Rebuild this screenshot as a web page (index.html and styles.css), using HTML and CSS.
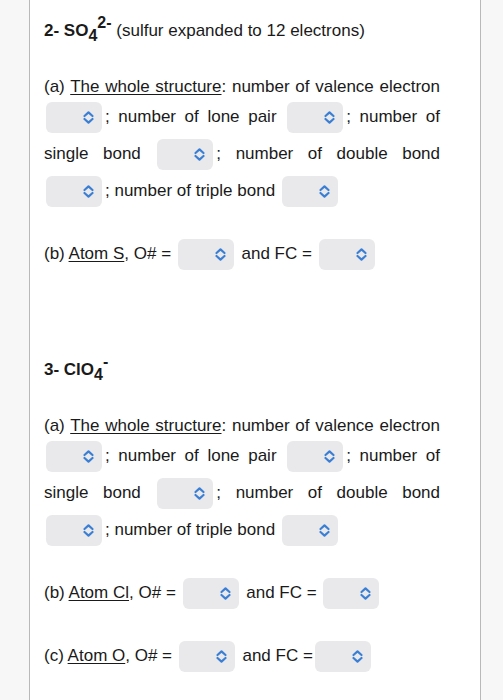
FILE: index.html
```html
<!DOCTYPE html>
<html>
<head>
<meta charset="utf-8">
<link rel="stylesheet" href="styles.css">
</head>
<body>
<div class="page">
  <div class="panel">
    <section class="q first">
      <h2 class="q-title"><b>2- SO<sub>4</sub><sup>2-</sup></b> (sulfur expanded to 12 electrons)</h2>
      <p class="part">(a) <u>The whole structure</u>: number of valence electron <span class="sel"><svg viewBox="0 0 10 12"><path d="M1.3 4.6 L5 1.3 L8.7 4.6 M1.3 7.4 L5 10.7 L8.7 7.4" fill="none" stroke="#3b7fd4" stroke-width="2" stroke-linecap="round" stroke-linejoin="round"/></svg></span>; number of lone pair <span class="sel"><svg viewBox="0 0 10 12"><path d="M1.3 4.6 L5 1.3 L8.7 4.6 M1.3 7.4 L5 10.7 L8.7 7.4" fill="none" stroke="#3b7fd4" stroke-width="2" stroke-linecap="round" stroke-linejoin="round"/></svg></span>; number of single&nbsp;bond <span class="sel"><svg viewBox="0 0 10 12"><path d="M1.3 4.6 L5 1.3 L8.7 4.6 M1.3 7.4 L5 10.7 L8.7 7.4" fill="none" stroke="#3b7fd4" stroke-width="2" stroke-linecap="round" stroke-linejoin="round"/></svg></span>; number of double bond <span class="sel"><svg viewBox="0 0 10 12"><path d="M1.3 4.6 L5 1.3 L8.7 4.6 M1.3 7.4 L5 10.7 L8.7 7.4" fill="none" stroke="#3b7fd4" stroke-width="2" stroke-linecap="round" stroke-linejoin="round"/></svg></span>; number of triple bond <span class="sel"><svg viewBox="0 0 10 12"><path d="M1.3 4.6 L5 1.3 L8.7 4.6 M1.3 7.4 L5 10.7 L8.7 7.4" fill="none" stroke="#3b7fd4" stroke-width="2" stroke-linecap="round" stroke-linejoin="round"/></svg></span></p>
      <p class="part">(b) <u>Atom S</u>, O# = <span class="sel"><svg viewBox="0 0 10 12"><path d="M1.3 4.6 L5 1.3 L8.7 4.6 M1.3 7.4 L5 10.7 L8.7 7.4" fill="none" stroke="#3b7fd4" stroke-width="2" stroke-linecap="round" stroke-linejoin="round"/></svg></span> and FC = <span class="sel"><svg viewBox="0 0 10 12"><path d="M1.3 4.6 L5 1.3 L8.7 4.6 M1.3 7.4 L5 10.7 L8.7 7.4" fill="none" stroke="#3b7fd4" stroke-width="2" stroke-linecap="round" stroke-linejoin="round"/></svg></span></p>
    </section>
    <section class="q">
      <h2 class="q-title"><b>3- ClO<sub>4</sub><sup>-</sup></b></h2>
      <p class="part">(a) <u>The whole structure</u>: number of valence electron <span class="sel"><svg viewBox="0 0 10 12"><path d="M1.3 4.6 L5 1.3 L8.7 4.6 M1.3 7.4 L5 10.7 L8.7 7.4" fill="none" stroke="#3b7fd4" stroke-width="2" stroke-linecap="round" stroke-linejoin="round"/></svg></span>; number of lone pair <span class="sel"><svg viewBox="0 0 10 12"><path d="M1.3 4.6 L5 1.3 L8.7 4.6 M1.3 7.4 L5 10.7 L8.7 7.4" fill="none" stroke="#3b7fd4" stroke-width="2" stroke-linecap="round" stroke-linejoin="round"/></svg></span>; number of single&nbsp;bond <span class="sel"><svg viewBox="0 0 10 12"><path d="M1.3 4.6 L5 1.3 L8.7 4.6 M1.3 7.4 L5 10.7 L8.7 7.4" fill="none" stroke="#3b7fd4" stroke-width="2" stroke-linecap="round" stroke-linejoin="round"/></svg></span>; number of double bond <span class="sel"><svg viewBox="0 0 10 12"><path d="M1.3 4.6 L5 1.3 L8.7 4.6 M1.3 7.4 L5 10.7 L8.7 7.4" fill="none" stroke="#3b7fd4" stroke-width="2" stroke-linecap="round" stroke-linejoin="round"/></svg></span>; number of triple bond <span class="sel"><svg viewBox="0 0 10 12"><path d="M1.3 4.6 L5 1.3 L8.7 4.6 M1.3 7.4 L5 10.7 L8.7 7.4" fill="none" stroke="#3b7fd4" stroke-width="2" stroke-linecap="round" stroke-linejoin="round"/></svg></span></p>
      <p class="part">(b) <u>Atom Cl</u>, O# = <span class="sel"><svg viewBox="0 0 10 12"><path d="M1.3 4.6 L5 1.3 L8.7 4.6 M1.3 7.4 L5 10.7 L8.7 7.4" fill="none" stroke="#3b7fd4" stroke-width="2" stroke-linecap="round" stroke-linejoin="round"/></svg></span> and FC = <span class="sel"><svg viewBox="0 0 10 12"><path d="M1.3 4.6 L5 1.3 L8.7 4.6 M1.3 7.4 L5 10.7 L8.7 7.4" fill="none" stroke="#3b7fd4" stroke-width="2" stroke-linecap="round" stroke-linejoin="round"/></svg></span></p>
      <p class="part">(c) <u>Atom O</u>, O# = <span class="sel"><svg viewBox="0 0 10 12"><path d="M1.3 4.6 L5 1.3 L8.7 4.6 M1.3 7.4 L5 10.7 L8.7 7.4" fill="none" stroke="#3b7fd4" stroke-width="2" stroke-linecap="round" stroke-linejoin="round"/></svg></span> and FC =<span class="sel"><svg viewBox="0 0 10 12"><path d="M1.3 4.6 L5 1.3 L8.7 4.6 M1.3 7.4 L5 10.7 L8.7 7.4" fill="none" stroke="#3b7fd4" stroke-width="2" stroke-linecap="round" stroke-linejoin="round"/></svg></span></p>
    </section>
  </div>
</div>
</body>
</html>
```

FILE: styles.css
```css
html, body {
  margin: 0;
  padding: 0;
  background: #f7f7f7;
}

body {
  font-family: "Liberation Sans", Arial, sans-serif;
  font-size: 17px;
  color: #1a1a1a;
}

.page {
  padding-left: 29px;
  width: 452px;
  min-height: 700px;
}

.panel {
  background: #fff;
  border-left: 1px solid #b9b9b9;
  border-right: 1px solid #b9b9b9;
  min-height: 700px;
  padding: 18px 40px 0 14px;
  box-sizing: border-box;
}

.q + .q {
  margin-top: 84px;
}

.q-title {
  margin: 0 0 31px;
  font-size: 17px;
  font-weight: normal;
  line-height: 26px;
  height: 26px;
}

.q-title b {
  font-weight: bold;
}

.q-title sub,
.q-title sup {
  font-size: 16px;
  line-height: 0;
  position: relative;
  vertical-align: baseline;
}

.q-title sub {
  top: 5px;
}

.q-title sup {
  top: -8px;
}

.part {
  margin: 0 0 26px;
  line-height: 24px;
  text-align: justify;
}

.part:last-child {
  margin-bottom: 0;
}

.q:last-child .part + .part {
  margin-top: 1px;
}

.part u {
  text-decoration-thickness: 1px;
  text-underline-offset: 2px;
}

.sel {
  display: inline-flex;
  align-items: center;
  justify-content: flex-end;
  box-sizing: border-box;
  width: 56px;
  height: 31px;
  margin: 3px 3px 3px 2px;
  padding-right: 8px;
  background: #e9e9eb;
  border-radius: 6px;
  vertical-align: middle;
}

.sel svg {
  display: block;
  flex-shrink: 0;
  width: 11px;
  height: 13px;
}
```
